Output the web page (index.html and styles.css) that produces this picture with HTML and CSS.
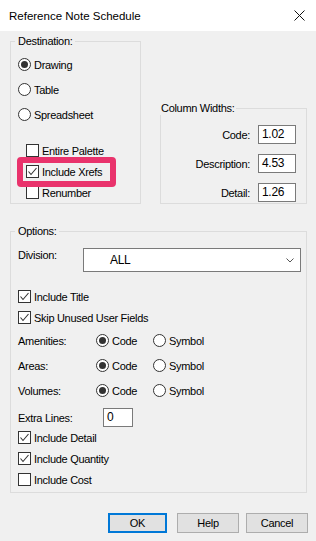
FILE: index.html
```html
<!DOCTYPE html>
<html lang="en">
<head>
    <meta charset="UTF-8">
    <meta name="viewport" content="width=device-width, initial-scale=1.0">
    <title>Reference Note Schedule</title>
    <link rel="stylesheet" href="styles.css">
</head>
<body>
<div class="dialog">
    <div class="titlebar">
        <span class="title">Reference Note Schedule</span>
        <svg class="close" width="11" height="11" viewBox="0 0 11 11">
            <path d="M0.5 0.5L10.5 10.5M10.5 0.5L0.5 10.5" stroke="#111" stroke-width="1" fill="none"/>
        </svg>
    </div>

    <div class="content">
        <div class="top-row">
            <fieldset class="group destination">
                <legend>Destination:</legend>
                <div class="radio-row"><span class="radio on"></span>Drawing</div>
                <div class="radio-row"><span class="radio"></span>Table</div>
                <div class="radio-row"><span class="radio"></span>Spreadsheet</div>
                <div class="check-list">
                    <div class="check-row"><span class="check"></span>Entire Palette</div>
                    <div class="check-row marked">
                        <span class="check"><svg width="11" height="11" viewBox="0 0 11 11"><path d="M1.5 5.5L4 8.5L9.5 2" stroke="#333" stroke-width="1.1" fill="none"/></svg></span>Include Xrefs
                        <span class="highlight"></span>
                    </div>
                    <div class="check-row"><span class="check"></span>Renumber</div>
                </div>
            </fieldset>

            <fieldset class="group widths">
                <legend>Column Widths:</legend>
                <div class="width-row"><span>Code:</span><span class="field">1.02</span></div>
                <div class="width-row"><span>Description:</span><span class="field">4.53</span></div>
                <div class="width-row"><span>Detail:</span><span class="field">1.26</span></div>
            </fieldset>
        </div>

        <fieldset class="group options">
            <legend>Options:</legend>
            <div class="division-row">
                <span class="division-label">Division:</span>
                <div class="select">
                    <span>ALL</span>
                    <svg width="8" height="5" viewBox="0 0 8 5"><path d="M0.5 0.5L4 4L7.5 0.5" stroke="#555" stroke-width="1" fill="none"/></svg>
                </div>
            </div>

            <div class="check-row"><span class="check"><svg width="11" height="11" viewBox="0 0 11 11"><path d="M1.5 5.5L4 8.5L9.5 2" stroke="#333" stroke-width="1.1" fill="none"/></svg></span>Include Title</div>
            <div class="check-row"><span class="check"><svg width="11" height="11" viewBox="0 0 11 11"><path d="M1.5 5.5L4 8.5L9.5 2" stroke="#333" stroke-width="1.1" fill="none"/></svg></span>Skip Unused User Fields</div>

            <div class="choice-row">
                <span class="choice-label">Amenities:</span>
                <span class="choice"><span class="radio on"></span>Code</span>
                <span class="choice"><span class="radio"></span>Symbol</span>
            </div>
            <div class="choice-row">
                <span class="choice-label">Areas:</span>
                <span class="choice"><span class="radio on"></span>Code</span>
                <span class="choice"><span class="radio"></span>Symbol</span>
            </div>
            <div class="choice-row">
                <span class="choice-label">Volumes:</span>
                <span class="choice"><span class="radio on"></span>Code</span>
                <span class="choice"><span class="radio"></span>Symbol</span>
            </div>

            <div class="extra-row">
                <span class="extra-label">Extra Lines:</span>
                <span class="field small">0</span>
            </div>

            <div class="check-row"><span class="check"><svg width="11" height="11" viewBox="0 0 11 11"><path d="M1.5 5.5L4 8.5L9.5 2" stroke="#333" stroke-width="1.1" fill="none"/></svg></span>Include Detail</div>
            <div class="check-row"><span class="check"><svg width="11" height="11" viewBox="0 0 11 11"><path d="M1.5 5.5L4 8.5L9.5 2" stroke="#333" stroke-width="1.1" fill="none"/></svg></span>Include Quantity</div>
            <div class="check-row"><span class="check"></span>Include Cost</div>
        </fieldset>

        <div class="buttons">
            <button class="btn ok">OK</button>
            <button class="btn help">Help</button>
            <button class="btn cancel">Cancel</button>
        </div>
    </div>
</div>
</body>
</html>
```

FILE: styles.css
```css
body {
    margin: 0;
    padding: 0;
    background-color: #f0f0f0;
    font-family: "Liberation Sans", Arial, sans-serif;
    font-size: 11px;
    letter-spacing: -0.3px;
    color: #000;
}

.dialog {
    width: 316px;
    height: 541px;
    overflow: hidden;
}

.titlebar {
    height: 31px;
    background-color: #fff;
    display: flex;
    align-items: center;
    justify-content: space-between;
    padding: 0 11px 0 9px;
    box-sizing: border-box;
}

.title {
    font-size: 11.5px;
    letter-spacing: 0;
}

.content {
    padding: 3px 0 0 10px;
}

.top-row {
    display: flex;
    align-items: flex-end;
    gap: 19px;
}

.group {
    margin: 0;
    border: 1px solid #dcdcdc;
    padding: 0 0 0 7px;
    box-sizing: border-box;
    min-width: 0;
}

.group legend {
    line-height: 14px;
    padding: 0 2px 0 3px;
    margin-left: -3px;
}

.destination {
    width: 131px;
    padding-top: 4px;
}

.widths {
    width: 147px;
    padding: 10px 10px 1px 0;
}

.options {
    width: 297px;
    margin-top: 20px;
    padding-top: 10px;
    padding-bottom: 2px;
}

.radio-row {
    height: 25px;
    display: flex;
    align-items: center;
    gap: 3px;
}

.radio {
    width: 13px;
    height: 13px;
    border: 1px solid #333;
    border-radius: 50%;
    box-sizing: border-box;
    background-color: #fff;
    display: flex;
    align-items: center;
    justify-content: center;
    flex-shrink: 0;
}

.radio.on::after {
    content: "";
    width: 7px;
    height: 7px;
    border-radius: 50%;
    background-color: #333;
}

.check-list {
    margin: 13px 0 0 8px;
}

.check-row {
    height: 21px;
    display: flex;
    align-items: center;
    gap: 3px;
}

.check {
    width: 13px;
    height: 13px;
    border: 1px solid #333;
    box-sizing: border-box;
    background-color: #fff;
    display: flex;
    align-items: center;
    justify-content: center;
    flex-shrink: 0;
}

.check svg {
    display: block;
}

.marked {
    position: relative;
}

.highlight {
    position: absolute;
    left: -9px;
    top: -4px;
    width: 99px;
    height: 30px;
    border: 6px solid #e9336c;
    border-radius: 4px;
    box-sizing: border-box;
}

.width-row {
    display: flex;
    justify-content: flex-end;
    align-items: center;
    gap: 8px;
    margin-bottom: 10px;
}

.width-row:last-child {
    margin-bottom: 0;
}

.field {
    width: 38px;
    height: 19px;
    border: 1px solid #7a7a7a;
    background-color: #fff;
    box-sizing: border-box;
    padding: 0 0 0 3px;
    font-size: 12px;
    line-height: 17px;
}

.field.small {
    width: 30px;
}

.division-row {
    display: flex;
    align-items: flex-start;
    margin-bottom: 14px;
}

.division-label {
    width: 65px;
    line-height: 14px;
}

.select {
    width: 218px;
    height: 24px;
    border: 1px solid #7a7a7a;
    background-color: #fff;
    box-sizing: border-box;
    display: flex;
    align-items: center;
    justify-content: space-between;
    padding: 0 6px 0 26px;
    font-size: 12px;
}

.choice-row {
    height: 25px;
    display: flex;
    align-items: center;
}

.choice-label {
    width: 78px;
}

.choice {
    display: flex;
    align-items: center;
    gap: 3px;
    width: 57px;
}

.extra-row {
    height: 19px;
    margin-top: 5px;
    display: flex;
    align-items: center;
}

.extra-label {
    width: 85px;
}

.buttons {
    display: flex;
    margin-top: 20px;
    padding-left: 98px;
    gap: 10px;
}

.btn {
    height: 20px;
    background-color: #e1e1e1;
    border: 1px solid #adadad;
    font-family: "Liberation Sans", Arial, sans-serif;
    font-size: 11px;
    letter-spacing: -0.3px;
    color: #000;
    padding: 0;
    box-sizing: border-box;
}

.ok {
    width: 59px;
    border: 2px solid #0078d7;
}

.help {
    width: 62px;
}

.cancel {
    width: 62px;
    margin-left: -3px;
}
```
